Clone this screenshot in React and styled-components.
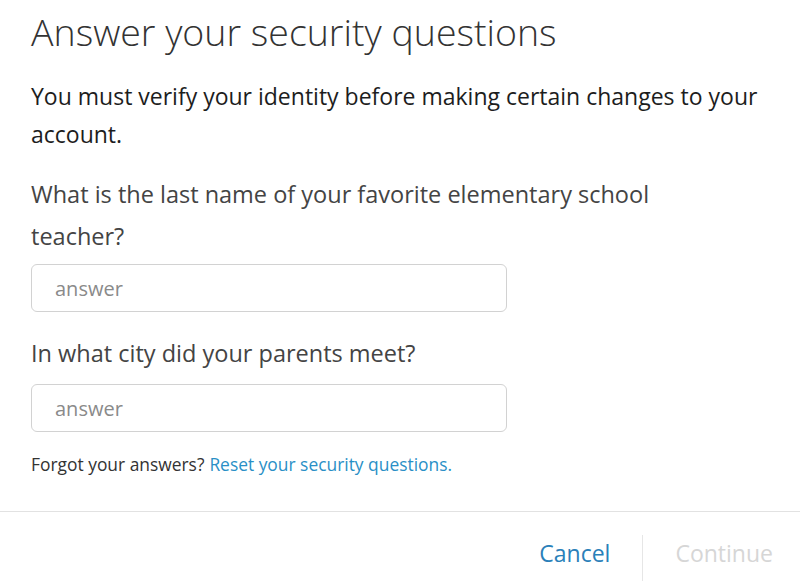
import React from 'react'
import styled, { createGlobalStyle } from 'styled-components'

const GlobalStyle = createGlobalStyle`
  html, body {
    margin: 0;
    padding: 0;
    background: #fff;
  }
  body {
    font-family: "Open Sans", "Liberation Sans", sans-serif;
    -webkit-font-smoothing: antialiased;
  }
`

const Dialog = styled.div`
  width: 800px;
  height: 582px;
  display: flex;
  flex-direction: column;
  background: #fff;
  overflow: hidden;
`

const Body = styled.div`
  padding: 10px 31px 0 31px;
  display: flex;
  flex-direction: column;
`

const Title = styled.h1`
  margin: 0;
  font-size: 37.5px;
  font-weight: 300;
  line-height: 44px;
  color: #333;
`

const Intro = styled.p`
  margin: 23px 0 0 0;
  font-size: 23px;
  line-height: 38px;
  color: #1d1d1d;
`

const Question = styled.label`
  display: block;
  max-width: 680px;
  margin-top: ${p => p.$top || 18}px;
  font-size: 23.5px;
  line-height: 42px;
  color: #444;
`

const AnswerInput = styled.input`
  box-sizing: border-box;
  display: block;
  width: 476px;
  height: 48px;
  margin-top: ${p => p.$top || 8}px;
  padding: 0 23px;
  border: 1px solid #d2d2d2;
  border-radius: 6px;
  font-family: inherit;
  font-size: 20px;
  color: #333;
  outline: none;

  &::placeholder {
    color: #8a8a8a;
  }
`

const Forgot = styled.p`
  margin: 21px 0 0 0;
  font-size: 17.4px;
  line-height: 22px;
  color: #333;

  a {
    color: #2a8fc6;
    text-decoration: none;
    margin-left: 5px;
  }
`

const Footer = styled.div`
  margin-top: auto;
  height: 71px;
  box-sizing: border-box;
  border-top: 1px solid #e2e2e2;
  display: flex;
  align-items: flex-start;
  justify-content: flex-end;
  gap: 32px;
  padding: 23px 27px 0 0;
`

const FooterButton = styled.button`
  background: none;
  border: none;
  padding: 0;
  font-family: inherit;
  font-size: 23px;
  line-height: 36px;
  color: ${p => (p.$disabled ? '#d6d6d6' : '#2a80b9')};
  cursor: ${p => (p.$disabled ? 'default' : 'pointer')};
`

const Separator = styled.div`
  width: 1px;
  height: 46px;
  background: #e6e6e6;
`

export default function App() {
  return (
    <>
      <GlobalStyle />
      <Dialog>
        <Body>
          <Title>Answer your security questions</Title>
          <Intro>
            You must verify your identity before making certain changes to your
            account.
          </Intro>
          <Question $top={20}>
            What is the last name of your favorite elementary school teacher?
          </Question>
          <AnswerInput placeholder="answer" $top={7} />
          <Question $top={20}>In what city did your parents meet?</Question>
          <AnswerInput placeholder="answer" $top={10} />
          <Forgot>
            Forgot your answers?<a href="#">Reset your security questions.</a>
          </Forgot>
        </Body>
        <Footer>
          <FooterButton>Cancel</FooterButton>
          <Separator />
          <FooterButton $disabled>Continue</FooterButton>
        </Footer>
      </Dialog>
    </>
  )
}
